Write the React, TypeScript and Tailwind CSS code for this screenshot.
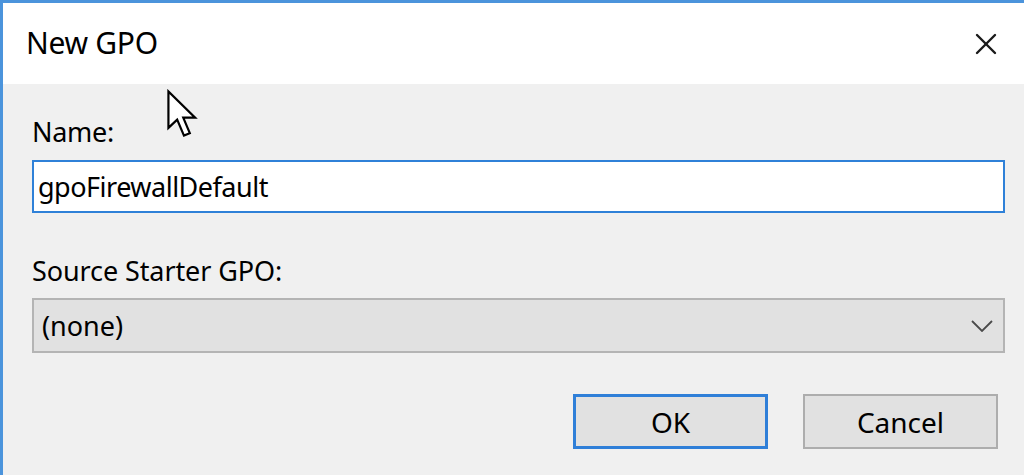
import { X } from 'lucide-react';

function Cursor() {
    return (
        <svg
            viewBox="0 0 14 21"
            className="absolute left-[163px] top-[86px] w-[34px] h-[51px]"
            fill="none"
        >
            <path
                d="M1 1 L1 16 L4.6 12.6 L7.4 19.2 L9.8 18.2 L7.1 11.8 L12 11.8 Z"
                fill="#ffffff"
                stroke="#000000"
                strokeWidth={0.9}
                strokeLinejoin="miter"
            />
        </svg>
    );
}

export default function App() {
    return (
        <div
            className="relative w-[1024px] h-[475px] overflow-hidden border-l-[3px] border-t-[3px] border-[#4b94dc] bg-[#f0f0f0] text-black"
            style={{ fontFamily: '"Segoe UI", "Noto Sans", sans-serif' }}
        >
            {/* Title bar */}
            <div className="h-[81px] bg-white flex items-center justify-between pl-[23px] pr-[20px]">
                <span className="text-[30px] leading-none pb-[2px] tracking-[-0.3px]">New GPO</span>
                <X className="w-[36px] h-[36px] text-[#1a1a1a]" strokeWidth={1.6} />
            </div>

            {/* Body */}
            <div className="pl-[29px] pr-[19px] pt-[31px]">
                <div className="text-[27px] leading-[34px] tracking-[-0.3px]">Name:</div>
                <div className="mt-[11px] h-[53px] bg-white border-2 border-[#2f81d8] flex items-center px-[4px]">
                    <span className="text-[27px] leading-none tracking-[-0.5px]">gpoFirewallDefault</span>
                </div>

                <div className="mt-[41px] text-[27px] leading-[34px] tracking-[-0.1px]">Source Starter GPO:</div>
                <div className="mt-[10px] h-[55px] bg-[#e1e1e1] border-2 border-[#b4b4b4] flex items-center justify-between pl-[8px] pr-[10px]">
                    <span className="text-[27px] leading-none">(none)</span>
                    <svg viewBox="0 0 22 12" className="w-[22px] h-[12px]" fill="none">
                        <path d="M1 1 L11 11 L21 1" stroke="#4a4a4a" strokeWidth={1.8} />
                    </svg>
                </div>

                <div className="mt-[41px] flex justify-end gap-[35px] pr-[7px]">
                    <button className="w-[195px] h-[55px] bg-[#e1e1e1] border-[3px] border-[#2f7fd8] text-[28px] leading-none flex items-center justify-center">
                        OK
                    </button>
                    <button className="w-[195px] h-[55px] bg-[#e1e1e1] border-2 border-[#adadad] text-[28px] leading-none flex items-center justify-center">
                        Cancel
                    </button>
                </div>
            </div>

            <Cursor />
        </div>
    );
}
